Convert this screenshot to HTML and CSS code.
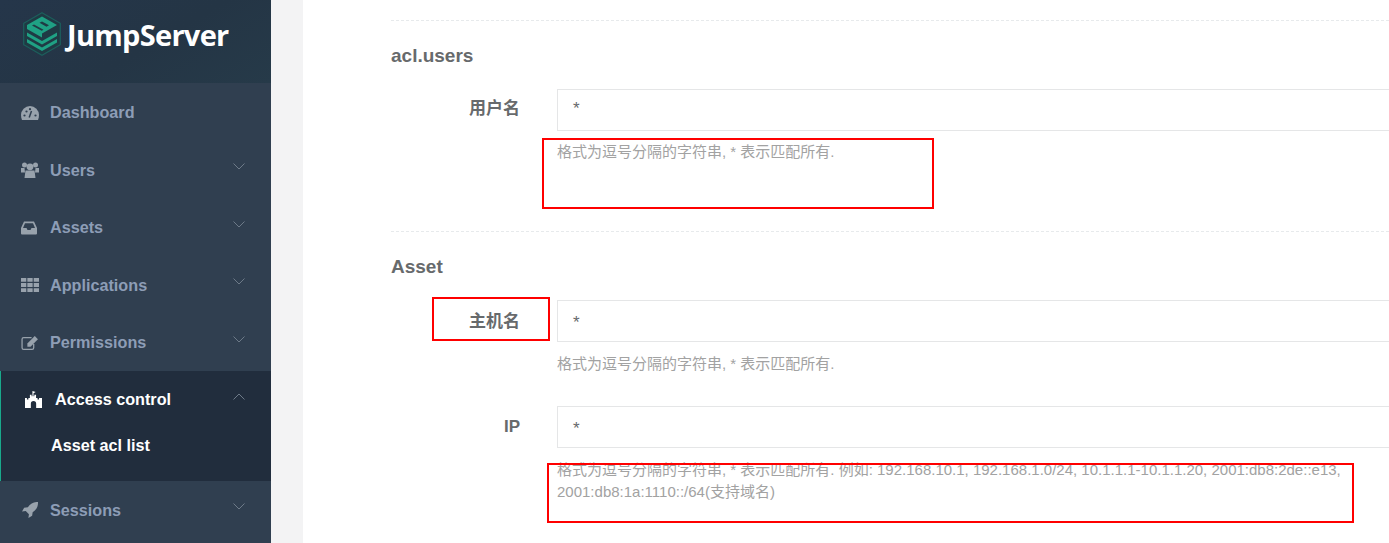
FILE: index.html
```html
<!DOCTYPE html>
<html>
<head>
    <title>JumpServer</title>
    <link rel="stylesheet" href="styles.css">
</head>
<body>
    <div class="side">
        <div class="logo">
            <svg class="logo-mark" viewBox="0 0 38 44" width="38" height="44">
                <path d="M19 .7 37.300 11.300v21.400L19 43.300.7 32.700V11.300z" fill="#1f3a44" stroke="#1c5f5c" stroke-width="1.200"/>
                <path d="M4 27 19 35.500 34 27v3.500L19 39 4 30.500z" fill="#1fa184"/>
                <path d="M4 20.500 19 29l15-8.500V24L19 32.500 4 24z" fill="#1fa184"/>
                <path d="M19 4.500 34 13 19 21.500v4L4 17V13z" fill="#1fa184"/>
                <path d="M19 9.500 26 13.200 23.500 14.700 16.500 10.800zM11 12.500l9.500 5.300-1.800 1-9.700-5.400z" fill="#1f3a44"/>
            </svg>
            <span class="logo-text">JumpServer</span>
        </div>
        <div class="nav-item">
            <svg class="ico" viewBox="0 0 18 14"><path d="M9 0a9 9 0 0 0-9 9c0 1.900.4 3.500 1 5h16c.6-1.500 1-3.100 1-5a9 9 0 0 0-9-9z" fill="#98a2ac"/><path d="M8.200 11.500 10.500 5" stroke="#303f50" stroke-width="1.500"/><circle cx="3.500" cy="9.500" r="1.100" fill="#303f50"/><circle cx="5.500" cy="5.500" r="1.100" fill="#303f50"/><circle cx="9" cy="3.200" r="1.100" fill="#303f50"/><circle cx="14.500" cy="9.500" r="1.100" fill="#303f50"/></svg>
            <span class="nav-label">Dashboard</span>
        </div>
        <div class="nav-item">
            <svg class="ico" viewBox="0 0 18 16"><circle cx="3.500" cy="3" r="2.500" fill="#98a2ac"/><circle cx="14.500" cy="3" r="2.500" fill="#98a2ac"/><circle cx="9" cy="4.800" r="3.400" fill="#98a2ac"/><path d="M0 6h3.500L4 10.500H0zM18 6h-3.500L14 10.500h4zM4.500 8.500h9l1 7.500h-11z" fill="#98a2ac"/></svg>
            <span class="nav-label">Users</span>
            <svg class="arrow" viewBox="0 0 12 7"><path d="M.5.500 6 6 11.500.500" fill="none" stroke="#6d7a88"/></svg>
        </div>
        <div class="nav-item">
            <svg class="ico" viewBox="0 0 18 15"><path d="M3 1h10l3 6.500V13a1 1 0 0 1-1 1H1a1 1 0 0 1-1-1V7.500zM4 2.700 2 7.500h3.500l1 2h3l1-2H14l-2-4.800z" fill="#98a2ac" fill-rule="evenodd"/></svg>
            <span class="nav-label">Assets</span>
            <svg class="arrow" viewBox="0 0 12 7"><path d="M.5.500 6 6 11.500.500" fill="none" stroke="#6d7a88"/></svg>
        </div>
        <div class="nav-item">
            <svg class="ico" viewBox="0 0 17 13"><path d="M0 0h5v3.500H0zM6 0h5v3.500H6zM12 0h5v3.500h-5zM0 4.700h5v3.600H0zM6 4.700h5v3.600H6zM12 4.700h5v3.600h-5zM0 9.500h5V13H0zM6 9.500h5V13H6zM12 9.500h5V13h-5z" fill="#98a2ac"/></svg>
            <span class="nav-label">Applications</span>
            <svg class="arrow" viewBox="0 0 12 7"><path d="M.5.500 6 6 11.500.500" fill="none" stroke="#6d7a88"/></svg>
        </div>
        <div class="nav-item">
            <svg class="ico" viewBox="0 0 17 14"><path d="M12 8v3.500a1.500 1.500 0 0 1-1.500 1.500h-8A1.500 1.500 0 0 1 1 11.500v-8A1.500 1.500 0 0 1 2.500 2H10" fill="none" stroke="#98a2ac" stroke-width="1.200"/><path d="M6 7.500 13 .5l3 3-7 7H6z" fill="#98a2ac"/></svg>
            <span class="nav-label">Permissions</span>
            <svg class="arrow" viewBox="0 0 12 7"><path d="M.5.500 6 6 11.500.500" fill="none" stroke="#6d7a88"/></svg>
        </div>
        <div class="nav-active">
            <div class="active-row">
                <svg class="ico-active" viewBox="0 0 16 16"><path d="M0 16V6.500h1.800V8h1.400V6.500h1.400V3.500h1.600V5h.8V0l3 1-2 1v3h.8V3.500h1.600v3h1.400V8h1.400V6.500H16V16h-5.500v-4a2.500 2.500 0 0 0-5 0v4z" fill="#fff"/></svg>
                <span class="active-label">Access control</span>
                <svg class="arrow" viewBox="0 0 12 7"><path d="M.5 6.500 6 1l5.500 5.500" fill="none" stroke="#6d7a88"/></svg>
            </div>
            <div class="sub-item">Asset acl list</div>
        </div>
        <div class="nav-item">
            <svg class="ico" viewBox="0 0 15 15"><path d="M15 0c.2 4-1.200 7-5 9.500l-.5 3.500L6 15l.5-3.500-3-3L0 9l2-3.500 3.500-.5C8 1.200 11 -.2 15 0z" fill="#98a2ac"/></svg>
            <span class="nav-label">Sessions</span>
            <svg class="arrow" viewBox="0 0 12 7"><path d="M.5.500 6 6 11.500.500" fill="none" stroke="#6d7a88"/></svg>
        </div>
    </div>

    <div class="gutter"></div>

    <div class="main">
        <div class="sep"></div>
        <h3 class="sec-title">acl.users</h3>
        <div class="field field-users">
            <label class="lab">用户名</label>
            <div class="input">*</div>
        </div>
        <div class="hint hint-users">
            格式为逗号分隔的字符串, * 表示匹配所有.
            <div class="mark mark-users"></div>
        </div>
        <div class="sep sep-asset"></div>
        <h3 class="sec-title">Asset</h3>
        <div class="field">
            <label class="lab">主机名<span class="mark mark-host"></span></label>
            <div class="input">*</div>
        </div>
        <div class="hint">格式为逗号分隔的字符串, * 表示匹配所有.</div>
        <div class="field">
            <label class="lab lab-ip">IP</label>
            <div class="input">*</div>
        </div>
        <div class="hint hint-ip">
            格式为逗号分隔的字符串, * 表示匹配所有. 例如: 192.168.10.1, 192.168.1.0/24, 10.1.1.1-10.1.1.20, 2001:db8:2de::e13, 2001:db8:1a:1110::/64(支持域名)
            <div class="mark mark-ip"></div>
        </div>
    </div>
</body>
</html>
```

FILE: styles.css
```css
* {
    margin: 0;
    padding: 0;
    box-sizing: border-box;
}

html, body {
    height: 543px;
    overflow: hidden;
}

body {
    display: flex;
    background-color: #fff;
    font-family: "Liberation Sans", "Noto Sans CJK SC", sans-serif;
}

.side {
    flex: 0 0 271px;
    height: 543px;
    overflow: hidden;
    background-color: #303f50;
}

.logo {
    display: flex;
    align-items: center;
    gap: 6px;
    height: 83px;
    padding: 0 0 15px 23px;
    background: linear-gradient(150deg, #25364a 0%, #243545 55%, #263a49 100%);
}

.logo-mark {
    flex: none;
}

.logo-text {
    font-family: "Open Sans", sans-serif;
    font-size: 29px;
    font-weight: 700;
    letter-spacing: -.7px;
    color: #fff;
}

.nav-item {
    display: flex;
    align-items: center;
    height: 57.5px;
    padding: 2px 26px 0 21px;
    color: #8d9db6;
    font-size: 16.2px;
    font-weight: 700;
}

.ico {
    flex: none;
    width: 18px;
    height: 16px;
    margin-right: 11px;
}

.nav-label {
    flex: 1;
}

.arrow {
    flex: none;
    width: 12px;
    height: 7px;
    margin-top: -7px;
}

.nav-active {
    height: 110px;
    border-left: 1px solid #19a98c;
    background-color: #212d3d;
}

.active-row {
    display: flex;
    align-items: center;
    height: 57px;
    padding: 1px 26px 0 24px;
    color: #fff;
    font-size: 16.2px;
    font-weight: 700;
}

.ico-active {
    flex: none;
    width: 17px;
    height: 17px;
    margin-right: 13px;
}

.active-label {
    flex: 1;
}

.sub-item {
    padding-left: 50px;
    margin-top: 8px;
    color: #fff;
    font-size: 16.2px;
    font-weight: 700;
}

.gutter {
    flex: 0 0 32px;
    background-color: #f3f3f4;
}

.main {
    flex: 1;
    min-width: 0;
    padding: 20px 0 0 88px;
}

.sep {
    height: 1px;
    border-top: 1px dashed #e7eaec;
}

.sep-asset {
    margin-top: 40px;
}

.sec-title {
    height: 68px;
    padding-top: 24px;
    color: #676a6c;
    font-size: 19px;
    font-weight: 700;
}

.field {
    display: flex;
    height: 42px;
}

.lab {
    position: relative;
    flex: 0 0 166px;
    padding: 7px 37px 0 0;
    color: #676a6c;
    font-size: 17px;
    font-weight: 700;
    text-align: right;
}

.lab-ip {
    padding-top: 11px;
}

.input {
    flex: 1;
    min-width: 0;
    margin-right: -1px;
    padding: 12px 15px 0;
    border: 1px solid #e5e6e7;
    color: #676a6c;
    font-size: 17px;
}

.field-users .lab {
    padding-top: 5px;
}

.field-users .input {
    padding-top: 9px;
}

.hint {
    position: relative;
    height: 64px;
    padding: 11px 40px 0 166px;
    color: #a2a2a2;
    font-size: 15px;
    line-height: 22px;
}

.hint-users {
    height: 60px;
    padding-top: 10px;
}

.hint-ip {
    height: 80px;
}

/* red annotation boxes drawn over the form */
.mark {
    position: absolute;
    border: 2px solid #f00;
    pointer-events: none;
}

.mark-users {
    left: 151px;
    top: 7px;
    width: 392px;
    height: 71px;
}

.mark-host {
    left: 41px;
    top: -3px;
    width: 118px;
    height: 44px;
}

.mark-ip {
    left: 156px;
    top: 15px;
    width: 807px;
    height: 60px;
}
```
